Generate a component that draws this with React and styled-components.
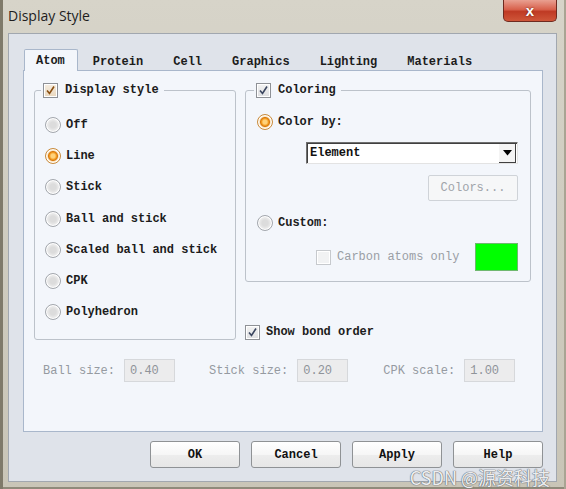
import React from "react";
import styled, { createGlobalStyle } from "styled-components";

const MONO = `"Liberation Mono", "DejaVu Sans Mono", monospace`;

const Global = createGlobalStyle`
  html, body { margin: 0; padding: 0; background: #cbc7b9; }
  body { width: 566px; height: 489px; overflow: hidden; }
  #root { width: 566px; height: 489px; }
  * { box-sizing: border-box; }
`;

const Window = styled.div`
  position: relative;
  width: 566px;
  height: 489px;
  display: flex;
  flex-direction: column;
  padding: 0 9px 7px 8px;
  background: linear-gradient(to bottom, #d7d4c9 0%, #d0cdc1 40%, #c9c5b7 100%);
  box-shadow: inset 3px 0 0 #7f7a6a, inset -2px 0 0 #a9a493, inset 0 -2px 0 #8f8a7a;
`;

const TitleBar = styled.div`
  height: 33px;
  display: flex;
  justify-content: space-between;
  align-items: flex-start;
`;

const Title = styled.div`
  margin-top: 6px;
  font-family: "Open Sans", "Noto Sans", sans-serif;
  font-size: 14px;
  line-height: 20px;
  color: #1e1e1e;
`;

const CloseButton = styled.div`
  width: 54px;
  height: 22px;
  display: flex;
  align-items: center;
  justify-content: center;
  border: 1px solid #6e2a1f;
  border-top: none;
  border-radius: 0 0 5px 5px;
  background: linear-gradient(to bottom, #e9a091 0%, #d8614c 45%, #bf3a24 55%, #cf5639 100%);
  color: #ffffff;
  font-family: "Liberation Sans", Arial, sans-serif;
  font-weight: bold;
  font-size: 15px;
  text-shadow: 0 0 2px #5a1a10;
`;

const Client = styled.div`
  flex: 1;
  display: flex;
  flex-direction: column;
  border: 1px solid #a1a7af;
  background: #dfe3ea;
  padding: 15px 13px 13px 14px;
`;

const TabBar = styled.div`
  position: relative;
  z-index: 1;
  display: flex;
  height: 22px;
  margin-left: 1px;
  margin-bottom: -1px;
`;

const Tab = styled.div`
  display: flex;
  align-items: center;
  font-family: ${MONO};
  font-weight: bold;
  font-size: 12px;
  color: #1c1c1c;
  ${(p) =>
    p.$active
      ? `
    height: 22px;
    padding: 1px 12px 0 11px;
    background: #f3f6fb;
    border: 1px solid #a9b7cb;
    border-bottom: none;
    border-radius: 2px 2px 0 0;
  `
      : `
    height: 21px;
    margin-top: 1px;
    padding: 3px 15px 0 15px;
  `}
`;

const Panel = styled.div`
  flex: 1;
  display: flex;
  flex-direction: column;
  background: #f3f6fb;
  border: 1px solid #a9b7cb;
  padding: 11px 10px 0 10px;
`;

const Columns = styled.div`
  display: grid;
  grid-template-columns: 202px 286px;
  column-gap: 9px;
`;

const Group = styled.fieldset`
  margin: 0;
  min-width: 0;
  display: flex;
  flex-direction: column;
  border: 1px solid #bcc2ca;
  border-radius: 3px;
  padding: ${(p) => p.$pad};
`;

const Legend = styled.legend`
  display: flex;
  align-items: center;
  gap: 7px;
  height: 16px;
  padding: 0 5px 0 2px;
  margin-left: ${(p) => p.$shift}px;
  font-family: ${MONO};
  font-weight: bold;
  font-size: 12px;
  color: #1c1c1c;
`;

const RadioList = styled.div`
  display: flex;
  flex-direction: column;
`;

const OptionRow = styled.div`
  display: flex;
  align-items: center;
  gap: ${(p) => p.$gap || 5}px;
  height: ${(p) => p.$h || 16}px;
  margin-top: ${(p) => p.$mt || 0}px;
  margin-left: ${(p) => p.$ml || 0}px;
  font-family: ${MONO};
  font-weight: ${(p) => (p.$disabled ? "normal" : "bold")};
  font-size: 12px;
  color: ${(p) => (p.$disabled ? "#9a9ea5" : "#1c1c1c")};
  white-space: nowrap;
`;

const Radio = styled.span`
  flex: none;
  width: 16px;
  height: 16px;
  border-radius: 50%;
  border: 1px solid ${(p) => (p.$checked ? "#c98b3c" : "#a3a7ad")};
  background: ${(p) =>
    p.$checked
      ? "radial-gradient(circle, #ffd27a 0 2px, #f39a1f 3.5px, #d6790f 4.5px, #fbe3bd 5.5px, #f6ead8 100%)"
      : "radial-gradient(circle, #dcdcdc 0 3px, #e8e8e8 5px, #f4f4f4 100%)"};
  box-shadow: inset 0 0 0 1px #ffffff;
`;

const Box = styled.span`
  flex: none;
  width: 15px;
  height: 15px;
  display: flex;
  align-items: center;
  justify-content: center;
  border: 1px solid ${(p) => (p.$disabled ? "#c6c9cd" : "#8e9196")};
  background: ${(p) =>
    p.$disabled
      ? "#f1f2f3"
      : p.$warm
      ? "linear-gradient(to bottom, #f6eee2, #e9d7bd)"
      : "linear-gradient(to bottom, #f3f3f3, #dedfe1)"};
  box-shadow: inset 0 0 0 1px #ffffff;
`;

const Check = ({ checked, disabled, warm }) => (
  <Box $disabled={disabled} $warm={warm}>
    {checked && (
      <svg width="11" height="11" viewBox="0 0 11 11">
        <path
          d="M2 5.5 L4.5 8.5 L9 1.5"
          fill="none"
          stroke={warm ? "#8a4f12" : "#3b4660"}
          strokeWidth="1.6"
        />
      </svg>
    )}
  </Box>
);

const SelectBox = styled.div`
  margin: 12px 0 0 49px;
  height: 22px;
  display: flex;
  align-items: center;
  justify-content: space-between;
  background: #ffffff;
  border: 1px solid;
  border-color: #6f6f6f #e3e3e3 #e3e3e3 #6f6f6f;
  box-shadow: inset 1px 1px 0 #404040;
  padding-left: 3px;
  font-family: ${MONO};
  font-weight: bold;
  font-size: 12px;
  color: #111;
`;

const SelectArrow = styled.span`
  width: 17px;
  height: 19px;
  margin-right: 1px;
  display: flex;
  align-items: center;
  justify-content: center;
  background: #f4f4f4;
  border-right: 1px solid #404040;
  border-bottom: 1px solid #404040;
`;

const SideButton = styled.div`
  align-self: flex-end;
  margin-top: 11px;
  width: 90px;
  height: 26px;
  display: flex;
  align-items: center;
  justify-content: center;
  border: 1px solid #cfd3d8;
  border-radius: 2px;
  background: #f6f7f8;
  font-family: ${MONO};
  font-size: 12px;
  color: #a0a4aa;
`;

const Swatch = styled.span`
  margin-left: auto;
  width: 43px;
  height: 28px;
  background: #00ff00;
  border: 1px solid #6fb86f;
`;

const RightColumn = styled.div`
  display: flex;
  flex-direction: column;
`;

const SizeRow = styled.div`
  display: flex;
  align-items: center;
  margin-top: 19px;
  height: 23px;
  padding-left: 9px;
  gap: 34px;
`;

const Field = styled.div`
  display: flex;
  align-items: center;
  gap: 9px;
  font-family: ${MONO};
  font-size: 12px;
  color: #959aa1;
  white-space: nowrap;
  & + & + & {
    margin-left: 1px;
  }
`;

const Input = styled.div`
  width: 51px;
  height: 23px;
  display: flex;
  align-items: center;
  padding-left: 5px;
  background: #ececed;
  border: 1px solid #d6d8db;
  color: #8f9399;
`;

const ButtonRow = styled.div`
  display: flex;
  justify-content: flex-end;
  gap: 11px;
  margin-top: 9px;
`;

const Button = styled.div`
  width: 90px;
  height: 27px;
  display: flex;
  align-items: center;
  justify-content: center;
  border: 1px solid #8f9295;
  border-radius: 3px;
  background: linear-gradient(to bottom, #ffffff 0%, #f6f6f6 50%, #ededed 51%, #e6e6e6 100%);
  font-family: ${MONO};
  font-weight: bold;
  font-size: 12px;
  color: #111;
`;

const Watermark = styled.div`
  position: absolute;
  right: 16px;
  bottom: 0px;
  font-family: "Noto Sans CJK SC", "Noto Sans", sans-serif;
  font-size: 18px;
  line-height: 24px;
  color: rgba(255, 255, 255, 0.9);
  text-shadow: 0 0 1px #6b7078, 0 0 1px #6b7078, 0 0 1px #6b7078;
  white-space: nowrap;
`;

const styles = ["Off", "Line", "Stick", "Ball and stick", "Scaled ball and stick", "CPK", "Polyhedron"];
const tabs = ["Atom", "Protein", "Cell", "Graphics", "Lighting", "Materials"];

export default function App() {
  return (
    <>
      <Global />
      <Window>
        <TitleBar>
          <Title>Display Style</Title>
          <CloseButton>x</CloseButton>
        </TitleBar>
        <Client>
          <TabBar>
            {tabs.map((t, i) => (
              <Tab key={t} $active={i === 0}>
                {t}
              </Tab>
            ))}
          </TabBar>
          <Panel>
            <Columns>
              <Group $pad="11px 0 10px 10px">
                <Legend $shift={-4}>
                  <Check checked warm />
                  Display style
                </Legend>
                <RadioList>
                  {styles.map((s) => (
                    <OptionRow key={s} $h={31.3}>
                      <Radio $checked={s === "Line"} />
                      {s}
                    </OptionRow>
                  ))}
                </RadioList>
              </Group>
              <RightColumn>
                <Group $pad="0 12px 10px 11px">
                  <Legend $shift={-3}>
                    <Check checked />
                    Coloring
                  </Legend>
                  <OptionRow $mt={16}>
                    <Radio $checked />
                    Color by:
                  </OptionRow>
                  <SelectBox>
                    Element
                    <SelectArrow>
                      <svg width="9" height="6" viewBox="0 0 9 6">
                        <path d="M0 0 H9 L4.5 5.5 Z" fill="#000" />
                      </svg>
                    </SelectArrow>
                  </SelectBox>
                  <SideButton>Colors...</SideButton>
                  <OptionRow $mt={14}>
                    <Radio />
                    Custom:
                  </OptionRow>
                  <OptionRow $mt={12} $h={28} $ml={59} $gap={6} $disabled>
                    <Check disabled />
                    Carbon atoms only
                    <Swatch />
                  </OptionRow>
                </Group>
                <OptionRow $mt={42} $gap={6}>
                  <Check checked />
                  Show bond order
                </OptionRow>
              </RightColumn>
            </Columns>
            <SizeRow>
              <Field>
                Ball size:
                <Input>0.40</Input>
              </Field>
              <Field>
                Stick size:
                <Input>0.20</Input>
              </Field>
              <Field>
                CPK scale:
                <Input>1.00</Input>
              </Field>
            </SizeRow>
          </Panel>
          <ButtonRow>
            <Button>OK</Button>
            <Button>Cancel</Button>
            <Button>Apply</Button>
            <Button>Help</Button>
          </ButtonRow>
        </Client>
        <Watermark>CSDN @源资科技</Watermark>
      </Window>
    </>
  );
}
